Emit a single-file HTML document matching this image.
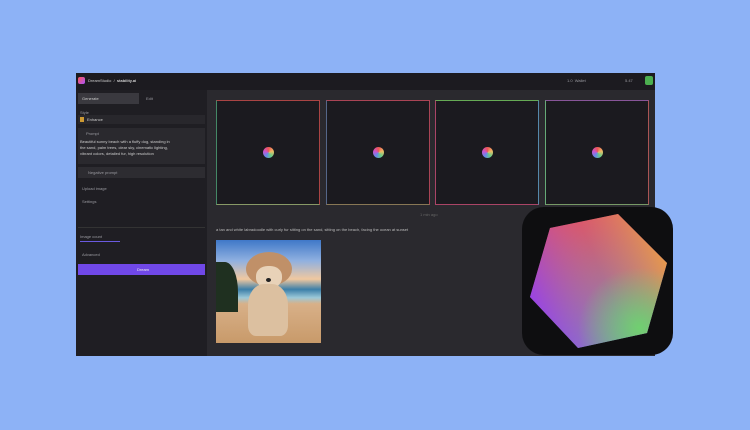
<!DOCTYPE html><html><head><style>
body{margin:0;width:750px;height:430px;background:#8db2f6;position:relative;overflow:hidden;font-family:"Liberation Sans",sans-serif}
.a{position:absolute}
.win{left:76px;top:73px;width:579px;height:283px;background:#2a292e}
.top{left:76px;top:73px;width:579px;height:17px;background:#1c1b20}
.side{left:76px;top:90px;width:131px;height:266px;background:#1f1e23}
.t{color:#9a9aa0;font-size:4px;white-space:nowrap}
.tile{width:102px;height:103px;background:#1b1a1f;border:1px solid}
.dot{position:absolute;left:46px;top:46px;width:11px;height:11px;border-radius:50%;background:conic-gradient(#e55,#eb6,#6c8,#68e,#c5c,#e55)}
</style></head><body>
<div class="a win"></div><div class="a top"></div><div class="a side"></div>
<div class="a" style="left:78px;top:77px;width:7px;height:7px;border-radius:2px;background:linear-gradient(135deg,#f55,#a5f)"></div>
<div class="a t" style="left:88px;top:78px;color:#ccc">DreamStudio &nbsp;/&nbsp; <b>stability.ai</b></div>
<div class="a t" style="left:567px;top:78px">1.0 &nbsp;Wallet</div><div class="a t" style="left:625px;top:78px">5.47</div>
<div class="a" style="left:645px;top:76px;width:8px;height:9px;border-radius:2px;background:#4caf50"></div>
<div class="a" style="left:78px;top:93px;width:61px;height:11px;background:#3a393f"></div>
<div class="a t" style="left:82px;top:96px;color:#ccc">Generate</div><div class="a t" style="left:146px;top:96px">Edit</div>
<div class="a t" style="left:80px;top:110px">Style</div>
<div class="a" style="left:78px;top:115px;width:127px;height:9px;background:#28272c"></div>
<div class="a" style="left:80px;top:117px;width:4px;height:5px;background:#c93"></div>
<div class="a t" style="left:87px;top:117px;color:#ccc">Enhance</div>
<div class="a" style="left:78px;top:128px;width:127px;height:36px;background:#2a292e"></div>
<div class="a t" style="left:86px;top:131px">Prompt</div>
<div class="a t" style="left:80px;top:139px;color:#ccc;line-height:6px">Beautiful sunny beach with a fluffy dog, standing in<br>the sand, palm trees, clear sky, cinematic lighting,<br>vibrant colors, detailed fur, high resolution</div>
<div class="a" style="left:78px;top:167px;width:127px;height:11px;background:#2d2c31"></div>
<div class="a t" style="left:88px;top:170px">Negative prompt</div>
<div class="a t" style="left:82px;top:186px">Upload image</div><div class="a t" style="left:82px;top:199px">Settings</div>
<div class="a" style="left:78px;top:227px;width:127px;height:1px;background:#333"></div>
<div class="a t" style="left:80px;top:234px">Image count</div>
<div class="a" style="left:80px;top:241px;width:40px;height:1px;background:#6a5ae0"></div>
<div class="a t" style="left:82px;top:252px">Advanced</div>
<div class="a" style="left:78px;top:264px;width:127px;height:11px;background:#7048e8"></div>
<div class="a t" style="left:137px;top:267px;color:#eee">Dream</div>
<div class="a tile" style="left:216px;top:100px;border-color:#a44 #a44 #896 #486"><div class="dot"></div></div>
<div class="a tile" style="left:326px;top:100px;border-color:#a45 #a45 #875 #568"><div class="dot"></div></div>
<div class="a tile" style="left:435px;top:100px;border-color:#6a5 #58a #a46 #a46"><div class="dot"></div></div>
<div class="a tile" style="left:545px;top:100px;border-color:#859 #a55 #796 #6a7"><div class="dot"></div></div>
<div class="a t" style="left:420px;top:212px;color:#666">1 min ago</div>
<div class="a t" style="left:216px;top:227px;color:#bbb">a tan and white labradoodle with curly fur sitting on the sand, sitting on the beach, facing the ocean at sunset</div>
<div class="a" style="left:216px;top:240px;width:105px;height:103px;overflow:hidden;background:linear-gradient(180deg,#3f78c8 0%,#8fb0e0 20%,#f0c8a0 38%,#3c7fa8 48%,#9cc8d8 56%,#d8b088 62%,#c89a6a 100%)">
<div class="a" style="left:0;top:22px;width:22px;height:50px;background:#1f3020;border-radius:0 60% 0 0"></div>
<div class="a" style="left:30px;top:12px;width:46px;height:34px;border-radius:50%;background:#c09068"></div>
<div class="a" style="left:40px;top:26px;width:26px;height:22px;border-radius:45%;background:#e8d2b8"></div>
<div class="a" style="left:32px;top:44px;width:40px;height:52px;border-radius:40% 40% 20% 20%;background:#dcc0a0"></div>
<div class="a" style="left:50px;top:38px;width:5px;height:4px;border-radius:50%;background:#222"></div>
</div>
<div class="a" style="left:522px;top:207px;width:151px;height:148px;border-radius:22px;background:#0e0e10"></div>
<svg class="a" style="left:0;top:0" width="750" height="430"><defs>
<linearGradient id="g1" x1="0.2" y1="0" x2="0.5" y2="1"><stop offset="0" stop-color="#f0355c"/><stop offset="1" stop-color="#4a8ee8"/></linearGradient>
<linearGradient id="g2" x1="1" y1="0.2" x2="0" y2="0.6"><stop offset="0" stop-color="#f0a040" stop-opacity="1"/><stop offset="0.5" stop-color="#d08070" stop-opacity="0.4"/><stop offset="1" stop-color="#9b3cf0" stop-opacity="0.8"/></linearGradient>
<radialGradient id="g3" cx="0.8" cy="0.85" r="0.45"><stop offset="0" stop-color="#70d070"/><stop offset="1" stop-color="#70d070" stop-opacity="0"/></radialGradient></defs>
<g><polygon points="550,228 618,214 667,263 647,333 578,348 530,297" fill="url(#g1)"/>
<polygon points="550,228 618,214 667,263 647,333 578,348 530,297" fill="url(#g2)"/>
<polygon points="550,228 618,214 667,263 647,333 578,348 530,297" fill="url(#g3)"/></g></svg>
</body></html>
